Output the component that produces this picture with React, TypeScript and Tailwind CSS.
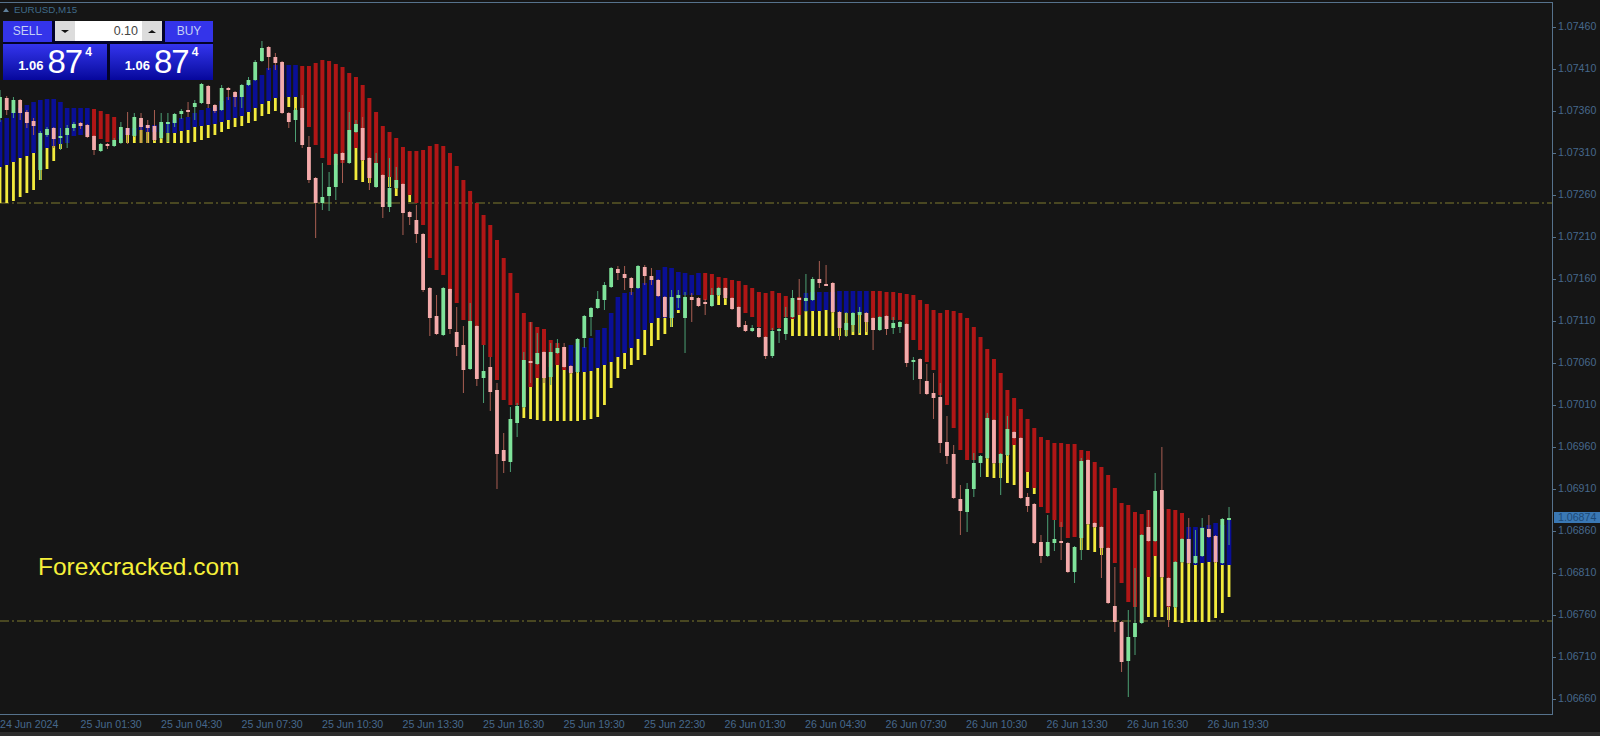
import React from "react";

// cloud rows: [top, split, bottom, red?] one per bar, split..bottom is the yellow part
const CLOUD: number[][] = [
  [120,167,203,0],[118,165,203,0],[112,162,201,0],[108,158,197,0],[105,156,193,0],[102,153,190,0],
  [100,150,180,0],[99,148,169,0],[99,146,161,0],[102,144,149,0],[108,143,143,0],[108,136,136,0],
  [108,135,135,0],[108,135,135,0],[109,137,137,1],[111,139,139,1],[114,142,142,1],[117,140,140,1],
  [130,139,143,0],[128,135,143,0],[128,135,143,0],[125,130,143,0],[125,132,143,0],[125,132,143,0],
  [124,132,143,0],[122,133,143,0],[120,133,143,0],[118,131,143,0],[117,130,143,0],[113,127,142,0],
  [110,126,140,0],[108,125,138,0],[107,124,135,0],[101,122,132,0],[97,120,129,0],[95,118,127,0],
  [90,116,126,0],[83,112,123,0],[80,108,121,0],[75,104,116,0],[68,101,114,0],[65,98,111,0],
  [65,97,110,0],[65,97,107,0],[65,97,110,0],
  [66,120,120,1],[66,127,127,1],[63,145,145,1],[60,158,158,1],[61,165,165,1],[64,165,165,1],
  [67,163,163,1],[73,150,150,1],[77,148,180,1],[85,160,182,1],[98,178,183,1],[112,163,187,1],
  [126,178,178,1],[132,177,187,1],[138,188,196,1],[147,185,185,1],[151,195,202,1],[151,203,203,1],
  [150,225,225,1],[146,258,258,1],[144,270,270,1],[146,275,275,1],[153,293,293,1],[166,303,303,1],
  [180,320,320,1],[191,330,330,1],[203,340,340,1],[215,345,345,1],[225,357,357,1],[240,380,380,1],
  [258,400,400,1],[273,405,405,1],[293,405,405,1],[313,400,418,1],[322,387,419,1],[327,378,420,1],
  [329,378,421,1],[340,367,421,1],[343,365,421,1],[347,370,421,1],
  [345,372,421,0],[343,372,421,0],[347,372,420,0],[338,371,419,0],[330,368,417,0],[328,365,405,0],
  [313,362,388,0],[297,357,378,0],[293,353,369,0],[292,348,365,0],[288,339,360,0],[283,330,355,0],
  [280,323,346,0],[270,318,340,0],[267,318,334,0],[268,318,327,0],[272,310,313,0],[273,295,295,0],
  [275,295,295,0],[273,295,295,0],
  [273,300,300,1],[274,295,295,1],[277,295,305,1],[278,295,305,1],[280,300,300,1],[281,307,307,1],
  [285,313,313,1],[288,317,317,1],[292,327,327,1],[293,337,337,1],[291,330,330,1],[293,328,328,1],
  [296,317,317,1],[300,319,336,1],[297,315,336,1],
  [293,311,336,0],[292,311,336,0],[292,311,336,0],[292,310,336,0],[292,311,336,0],[291,312,336,0],
  [291,313,336,0],[291,313,335,0],[291,313,335,0],[291,313,335,0],
  [291,320,320,1],[291,317,317,1],[292,320,320,1],[292,320,320,1],[293,320,320,1],[294,360,360,1],
  [295,340,340,1],[300,350,350,1],[304,362,362,1],[310,370,370,1],[313,395,395,1],[310,405,405,1],
  [311,428,428,1],[313,450,450,1],[318,460,460,1],[327,460,460,1],[337,453,453,1],[349,458,477,1],
  [359,463,478,1],[373,463,478,1],[390,455,483,1],[398,445,485,1],[409,498,498,1],[419,472,488,1],
  [428,488,494,1],[437,507,507,1],[440,513,513,1],[443,520,520,1],[443,527,527,1],[444,538,538,1],
  [444,537,537,1],[450,538,550,1],[451,523,550,1],[462,527,552,1],[467,548,555,1],[475,560,560,1],
  [488,563,563,1],[503,583,583,1],[505,602,602,1],[512,607,607,1],[514,622,622,1],[510,577,617,1],
  [510,556,617,1],[509,577,617,1],[509,607,620,1],[510,607,622,1],[513,562,623,1],
  [527,563,622,0],[527,565,622,0],[527,563,622,0],[525,562,622,0],[523,562,618,0],[525,565,613,0],
  [520,565,597,0],
];

// candle rows: [body top, body bottom, wick top, wick bottom, up?]
const CANDLES: number[][] = [
  [97,118,90,122,1],[98,110,96,115,0],[100,113,97,118,1],[100,113,99,120,0],[112,123,110,128,0],[121,126,118,135,0],
  [133,170,131,180,1],[129,135,127,137,1],[128,139,127,148,0],[136,138,128,150,1],[128,135,125,148,1],[124,128,122,131,1],
  [123,126,122,129,0],[125,137,124,138,0],[136,150,135,155,0],[144,151,143,152,1],[144,145,143,149,0],[140,146,138,147,1],
  [127,143,122,144,1],[128,135,112,144,0],[117,136,113,137,1],[118,127,113,143,0],[125,128,120,143,0],[126,140,110,141,0],
  [122,138,113,139,1],[122,123,113,142,1],[114,123,113,127,1],[111,114,109,119,1],[110,111,102,117,0],[103,107,100,120,1],
  [84,103,83,104,1],[86,104,85,108,0],[105,111,104,113,0],[88,110,85,111,1],[88,90,87,100,0],[92,97,91,107,0],
  [85,97,84,108,1],[80,85,77,86,1],[62,80,60,81,1],[48,61,41,62,1],[47,57,46,70,0],[57,63,53,70,0],
  [62,113,61,114,0],[113,122,112,128,0],[110,120,108,142,1],
  [108,145,95,148,0],[147,180,136,183,0],[178,203,177,238,0],[197,203,163,210,1],[187,196,172,211,1],[154,187,153,200,1],
  [153,160,152,183,0],[130,163,112,164,1],[124,132,120,133,1],[128,160,117,161,0],[158,178,157,190,0],[163,187,153,188,1],
  [175,207,174,218,0],[188,207,158,212,1],[180,188,167,189,1],[184,213,183,235,0],[212,217,211,225,0],[220,234,205,243,0],
  [234,290,233,292,0],[288,318,287,336,0],[316,334,295,335,0],[288,335,287,336,1],[289,329,288,334,0],[332,347,307,356,0],
  [345,370,326,393,0],[321,369,303,370,1],[326,379,325,386,0],[371,378,345,403,1],[367,392,357,411,0],[390,454,383,489,0],
  [450,461,433,473,0],[419,462,407,472,1],[406,423,403,437,1],[360,407,352,408,1],[361,363,322,383,0],[353,364,333,365,1],
  [352,378,351,383,0],[352,377,343,385,1],[348,353,339,354,1],[347,367,343,368,0],[366,373,365,374,0],[339,372,338,373,1],
  [316,338,315,348,1],[308,317,307,336,1],[299,308,291,309,1],[285,300,282,310,1],[268,287,267,288,1],[269,273,266,280,0],
  [274,278,266,290,0],[278,288,277,295,0],[266,288,265,289,1],[267,276,265,285,0],[276,280,268,285,0],[280,296,279,297,0],
  [297,317,296,318,0],[297,318,290,327,1],[295,298,290,308,1],[297,318,292,353,1],[297,300,293,322,0],[298,306,297,307,0],
  [302,303,299,315,0],[295,306,288,307,1],[288,295,287,296,1],[288,298,287,299,0],[298,309,297,310,0],[307,327,306,328,0],
  [325,331,321,332,0],[328,331,325,332,1],[328,337,327,338,0],[337,356,336,359,0],[331,356,328,358,1],[329,331,328,343,1],
  [318,334,307,340,1],[298,317,290,318,1],[298,300,279,315,0],[298,301,274,312,1],[279,300,277,301,1],[279,283,261,288,0],
  [284,285,265,286,0],[283,312,282,313,0],[312,328,311,340,0],[323,330,312,337,1],[313,325,312,332,1],[312,315,307,333,1],
  [313,322,312,332,0],[318,330,317,350,0],[317,330,316,331,1],[316,329,315,335,0],[323,328,317,334,1],[322,327,321,333,1],
  [324,363,323,367,0],[360,362,357,380,1],[359,379,358,394,0],[381,394,364,395,0],[393,398,373,419,0],[397,443,383,453,0],
  [442,456,416,464,0],[454,498,445,499,0],[499,511,485,535,0],[489,512,483,532,1],[463,489,453,497,1],[456,463,455,477,1],
  [418,458,413,459,1],[420,463,419,464,0],[454,463,453,495,1],[429,455,416,456,1],[432,438,431,439,0],[438,498,437,499,0],
  [497,506,493,512,0],[504,543,503,544,0],[542,556,535,563,0],[542,556,515,557,1],[539,543,520,551,1],[541,543,522,560,0],
  [543,572,542,573,0],[547,572,546,583,1],[461,538,458,560,1],[460,524,459,525,0],[523,527,522,528,0],[527,548,526,578,0],
  [548,603,547,604,0],[606,622,567,632,0],[622,662,621,672,0],[637,661,610,697,1],[623,637,568,655,1],[535,623,534,624,1],
  [527,541,510,542,0],[491,541,473,542,1],[490,577,447,578,0],[578,606,577,627,0],[562,607,561,608,1],[539,562,538,563,1],
  [539,563,518,564,0],[556,563,530,564,1],[528,556,518,557,1],[529,537,515,538,0],[536,562,535,563,0],[519,563,518,564,1],
  [518,520,507,545,1],
];

const PRICES = [
  "1.07460","1.07410","1.07360","1.07310","1.07260","1.07210","1.07160","1.07110","1.07060",
  "1.07010","1.06960","1.06910","1.06860","1.06810","1.06760","1.06710","1.06660",
];

const TIMES = [
  "24 Jun 2024","25 Jun 01:30","25 Jun 04:30","25 Jun 07:30","25 Jun 10:30","25 Jun 13:30","25 Jun 16:30","25 Jun 19:30",
  "25 Jun 22:30","26 Jun 01:30","26 Jun 04:30","26 Jun 07:30","26 Jun 10:30","26 Jun 13:30","26 Jun 16:30","26 Jun 19:30",
];

const STEP = 6.716;

const Chart = () => (
  <svg viewBox="0 3 1552 711" className="block w-full h-full">
    {[203, 621].map((y) => (
      <line key={y} x1="0" x2="1552" y1={y} y2={y} stroke="#8a8632" strokeWidth="0.9" strokeDasharray="9 3 2 3" />
    ))}
    {CLOUD.map(([top, split, bottom, red], i) => {
      const x = i * STEP;
      const w = red ? 4 : 4.6;
      return (
        <g key={i}>
          <rect x={x - w / 2} y={top} width={w} height={split - top} fill={red ? "#b01616" : "#0a0f96"} />
          {bottom > split && <rect x={x - 1.4} y={split} width="2.8" height={bottom - split} fill="#f2ea3c" />}
        </g>
      );
    })}
    {CANDLES.map(([bt, bb, wt, wb, up], i) => {
      const x = i * STEP;
      return (
        <g key={i}>
          <rect x={x - 0.5} y={wt} width="1" height={wb - wt} fill={up ? "#4c9f74" : "#a85e52"} />
          <rect x={x - 1.9} y={bt} width="3.8" height={Math.max(bb - bt, 2)} fill={up ? "#7fe39a" : "#f4abab"} />
        </g>
      );
    })}
  </svg>
);

const PriceBox = ({ wide }: { wide: string }) => (
  <div className={`${wide} h-[36px] flex items-start justify-center bg-gradient-to-b from-[#3434ee] to-[#06069c] text-white`}>
    <span className="text-[13px] font-bold mt-[14px] mr-[4px] leading-[16px]">1.06</span>
    <span className="text-[33px] leading-[36px] tracking-[-1px]">87</span>
    <span className="text-[12px] font-bold ml-[3px] mt-[1px] leading-[14px]">4</span>
  </div>
);

const TradePanel = () => (
  <div className="absolute left-[3px] top-[21px] w-[210px] flex flex-col gap-[2px] bg-[#03032a]">
    <div className="flex h-[21px] justify-between">
      <button className="w-[49px] bg-[#3434ea] text-[#c4d0f4] text-[12px] leading-[21px]">SELL</button>
      <div className="w-[107px] flex bg-white text-[#444] text-[12.5px] leading-[20px] h-[20px]">
        <span className="w-[20px] bg-[#dcdcdc] flex items-center justify-center">
          <span className="w-0 h-0 border-x-[4px] border-x-transparent border-t-[3px] border-t-[#111]" />
        </span>
        <span className="flex-1 text-right pr-[4px]">0.10</span>
        <span className="w-[20px] bg-[#dcdcdc] flex items-center justify-center">
          <span className="w-0 h-0 border-x-[4px] border-x-transparent border-b-[3px] border-b-[#111]" />
        </span>
      </div>
      <button className="w-[48px] bg-[#3434ea] text-[#c4d0f4] text-[12px] leading-[21px]">BUY</button>
    </div>
    <div className="flex justify-between">
      <PriceBox wide="w-[104px]" />
      <PriceBox wide="w-[103px]" />
    </div>
  </div>
);

export default function App() {
  return (
    <div className="relative w-[1600px] h-[736px] bg-[#151515] flex flex-col overflow-hidden font-['Liberation_Sans',Arial,sans-serif]">
      <div className="flex pt-[2px] h-[715px]">
        <div className="w-[1553px] border-t border-r border-b border-[#56728c]">
          <Chart />
        </div>
        <div className="flex-1 flex flex-col pt-[4px] text-[10.6px] text-[#46688c]">
          {PRICES.map((p) => (
            <div key={p} className="h-[42px] shrink-0 flex items-center gap-[2px]">
              <span className="w-[3px] h-px bg-[#56728c]" />
              <span>{p}</span>
            </div>
          ))}
        </div>
      </div>
      <div className="flex h-[17px] text-[10.6px] text-[#46688c] leading-[19px]">
        {TIMES.map((t) => (
          <span key={t} className="w-[80.5px] shrink-0 whitespace-nowrap">{t}</span>
        ))}
      </div>
      <div className="flex-1 bg-[#2c2c2c]" />

      <div className="absolute left-[3px] top-[4px] flex items-center gap-[5px] text-[9.8px] leading-[12px] text-[#3f6a88]">
        <span className="w-0 h-0 border-x-[3.5px] border-x-transparent border-b-[4px] border-b-[#5f7f9a]" />
        <span>EURUSD,M15</span>
      </div>
      <TradePanel />
      <div className="absolute left-[38px] top-[553px] text-[24.5px] leading-[28px] text-[#f6f03a]">Forexcracked.com</div>
      <div className="absolute right-0 top-[512px] w-[46px] h-[11px] bg-[#3a78b4] text-[10.6px] leading-[11px] pl-[4px] text-[#1c4a78]">1.06874</div>
    </div>
  );
}
